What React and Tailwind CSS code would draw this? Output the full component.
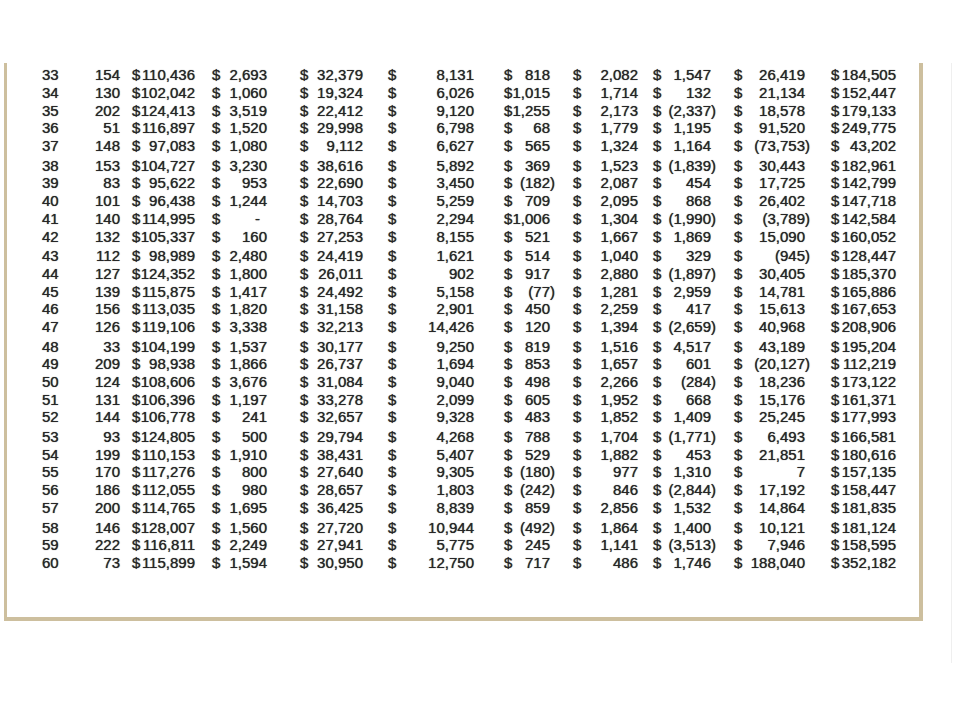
import React from 'react';

// rows 33-60: [row, count, col3, col4, col5, col7, col8, col9, col10, col11, col12]
const rows = [
  ["33", "154", "110,436", "2,693", "32,379", "8,131", "818", "2,082", "1,547", "26,419", "184,505"],
  ["34", "130", "102,042", "1,060", "19,324", "6,026", "1,015", "1,714", "132", "21,134", "152,447"],
  ["35", "202", "124,413", "3,519", "22,412", "9,120", "1,255", "2,173", "(2,337)", "18,578", "179,133"],
  ["36", "51", "116,897", "1,520", "29,998", "6,798", "68", "1,779", "1,195", "91,520", "249,775"],
  ["37", "148", "97,083", "1,080", "9,112", "6,627", "565", "1,324", "1,164", "(73,753)", "43,202"],
  ["38", "153", "104,727", "3,230", "38,616", "5,892", "369", "1,523", "(1,839)", "30,443", "182,961"],
  ["39", "83", "95,622", "953", "22,690", "3,450", "(182)", "2,087", "454", "17,725", "142,799"],
  ["40", "101", "96,438", "1,244", "14,703", "5,259", "709", "2,095", "868", "26,402", "147,718"],
  ["41", "140", "114,995", "-", "28,764", "2,294", "1,006", "1,304", "(1,990)", "(3,789)", "142,584"],
  ["42", "132", "105,337", "160", "27,253", "8,155", "521", "1,667", "1,869", "15,090", "160,052"],
  ["43", "112", "98,989", "2,480", "24,419", "1,621", "514", "1,040", "329", "(945)", "128,447"],
  ["44", "127", "124,352", "1,800", "26,011", "902", "917", "2,880", "(1,897)", "30,405", "185,370"],
  ["45", "139", "115,875", "1,417", "24,492", "5,158", "(77)", "1,281", "2,959", "14,781", "165,886"],
  ["46", "156", "113,035", "1,820", "31,158", "2,901", "450", "2,259", "417", "15,613", "167,653"],
  ["47", "126", "119,106", "3,338", "32,213", "14,426", "120", "1,394", "(2,659)", "40,968", "208,906"],
  ["48", "33", "104,199", "1,537", "30,177", "9,250", "819", "1,516", "4,517", "43,189", "195,204"],
  ["49", "209", "98,938", "1,866", "26,737", "1,694", "853", "1,657", "601", "(20,127)", "112,219"],
  ["50", "124", "108,606", "3,676", "31,084", "9,040", "498", "2,266", "(284)", "18,236", "173,122"],
  ["51", "131", "106,396", "1,197", "33,278", "2,099", "605", "1,952", "668", "15,176", "161,371"],
  ["52", "144", "106,778", "241", "32,657", "9,328", "483", "1,852", "1,409", "25,245", "177,993"],
  ["53", "93", "124,805", "500", "29,794", "4,268", "788", "1,704", "(1,771)", "6,493", "166,581"],
  ["54", "199", "110,153", "1,910", "38,431", "5,407", "529", "1,882", "453", "21,851", "180,616"],
  ["55", "170", "117,276", "800", "27,640", "9,305", "(180)", "977", "1,310", "7", "157,135"],
  ["56", "186", "112,055", "980", "28,657", "1,803", "(242)", "846", "(2,844)", "17,192", "158,447"],
  ["57", "200", "114,765", "1,695", "36,425", "8,839", "859", "2,856", "1,532", "14,864", "181,835"],
  ["58", "146", "128,007", "1,560", "27,720", "10,944", "(492)", "1,864", "1,400", "10,121", "181,124"],
  ["59", "222", "116,811", "2,249", "27,941", "5,775", "245", "1,141", "(3,513)", "7,946", "158,595"],
  ["60", "73", "115,899", "1,594", "30,950", "12,750", "717", "486", "1,746", "188,040", "352,182"],
];

// accounting style: positives keep a gap where the closing paren would sit
function Num({ v }) {
  const neg = v.endsWith(")");
  if (v === "-") return <span className="pr-[12px]">-</span>;
  return <span className={neg ? "" : "pr-[5px]"}>{v}</span>;
}

function Money({ v, className }) {
  return (
    <div className={"flex justify-between " + className}>
      <span>$</span>
      <Num v={v} />
    </div>
  );
}

function Row({ r, first }) {
  return (
    <div className={"flex h-[17.7px] items-center leading-none " + (first ? "mt-[2px]" : "")}>
      <div className="ml-[35px] w-[38px]">{r[0]}</div>
      <div className="w-[40px] text-right">{r[1]}</div>
      <Money v={r[2]} className="ml-[12px] w-[68px]" />
      <Money v={r[3]} className="ml-[12px] w-[60px]" />
      <Money v={r[4]} className="ml-[28px] w-[68px]" />
      <Money v={r[5]} className="ml-[20px] w-[91px]" />
      <Money v={r[6]} className="ml-[25px] w-[51px]" />
      <Money v={r[7]} className="ml-[18px] w-[70px]" />
      <Money v={r[8]} className="ml-[10px] w-[63px]" />
      <Money v={r[9]} className="ml-[18px] w-[76px]" />
      <Money v={r[10]} className="ml-[21px] w-[70px]" />
    </div>
  );
}

export default function App() {
  return (
    <div className="w-[960px] h-[720px] bg-white flex items-start overflow-hidden">
      <div className="ml-[4px] mt-[63px] w-[919px] h-[558px] border-l-[3px] border-r-[4px] border-b-[4px] border-[#cdbf9e] pt-[3px] font-['Liberation_Sans',Arial,sans-serif] text-[15px] text-[#262626] [text-shadow:0_0_0.8px_#333]">
        {rows.map((r, i) => (
          <Row key={r[0]} r={r} first={i > 0 && i % 5 === 0} />
        ))}
      </div>
      <div className="ml-[28px] mt-[63px] w-px h-[600px] bg-[#efefef]" />
    </div>
  );
}
